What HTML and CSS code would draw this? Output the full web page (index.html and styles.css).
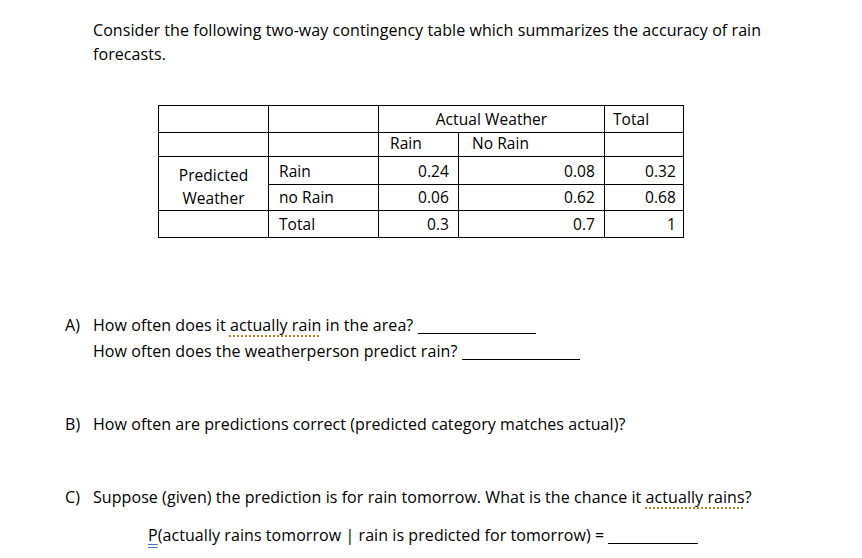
FILE: index.html
```
<!DOCTYPE html>
<html>
<head>
<meta charset="utf-8">
<link rel="stylesheet" href="styles.css">
</head>
<body>
<div class="page">
  <p class="intro">Consider the following two-way contingency table which summarizes the accuracy of rain<br>forecasts.</p>

  <table class="ct">
    <colgroup>
      <col class="c1"><col class="c2"><col class="c3"><col class="c4"><col class="c5">
    </colgroup>
    <tr class="r1">
      <td></td><td></td>
      <td colspan="2" class="center">Actual Weather</td>
      <td class="tot-head">Total</td>
    </tr>
    <tr class="r2">
      <td></td><td></td>
      <td class="rain-head">Rain</td>
      <td class="norain-head">No Rain</td>
      <td></td>
    </tr>
    <tr class="r3">
      <td rowspan="2" class="pred">Predicted<br>Weather</td>
      <td class="lab">Rain</td>
      <td class="num">0.24</td>
      <td class="num">0.08</td>
      <td class="num last">0.32</td>
    </tr>
    <tr class="r4">
      <td class="lab">no Rain</td>
      <td class="num">0.06</td>
      <td class="num">0.62</td>
      <td class="num last">0.68</td>
    </tr>
    <tr class="r5">
      <td></td>
      <td class="lab">Total</td>
      <td class="num">0.3</td>
      <td class="num">0.7</td>
      <td class="num last">1</td>
    </tr>
  </table>

  <div class="q qa">
    <span class="label">A)</span>
    <div class="qtext">
      <div class="line">How often does it <span class="spell">actually rain</span> in the area? <span class="blank w118"></span></div>
      <div class="line">How often does the weatherperson predict rain? <span class="blank w118"></span></div>
    </div>
  </div>

  <div class="q qb">
    <span class="label">B)</span>
    <div class="qtext">
      <div class="line">How often are predictions correct (predicted category matches actual)?</div>
    </div>
  </div>

  <div class="q qc">
    <span class="label">C)</span>
    <div class="qtext">
      <div class="line">Suppose (given) the prediction is for rain tomorrow. What is the chance it <span class="spell">actually rains</span>?</div>
    </div>
  </div>

  <div class="formula"><span class="gram">P</span>(actually rains tomorrow | rain is predicted for tomorrow) = <span class="blank w90"></span></div>
</div>
</body>
</html>
```

FILE: styles.css
```
html, body {
  margin: 0;
  padding: 0;
  background: #ffffff;
}

body {
  font-family: "Open Sans", "Lato", sans-serif;
  font-size: 16px;
  letter-spacing: 0.07px;
  color: #000000;
}

.page {
  width: 862px;
  height: 558px;
  padding-top: 18px;
  box-sizing: border-box;
  overflow: hidden;
}

.intro {
  margin: 0 0 0 93px;
  line-height: 24px;
  white-space: nowrap;
}

.ct {
  margin: 39px 0 0 158px;
  border-collapse: collapse;
  table-layout: fixed;
  width: 525px;
  font-size: 15.5px;
}

.ct td {
  border: 1px solid #000;
  padding: 0 0 3px 0;
  line-height: 20px;
  vertical-align: bottom;
  white-space: nowrap;
}

.c1 { width: 110px; }
.c2 { width: 110px; }
.c3 { width: 80px; }
.c4 { width: 146px; }
.c5 { width: 79px; }

.r1 td { height: 23px; }
.r2 td { height: 20px; }
.r3 td { height: 24px; }
.r4 td { height: 22px; }
.r5 td { height: 23px; }

.center { text-align: center; }
.tot-head { padding-left: 8px !important; }
.rain-head { padding-left: 11px !important; }
.norain-head { padding-left: 13px !important; }
.lab { padding-left: 10px !important; }
.num { text-align: right; padding-right: 9px !important; }
.num.last { padding-right: 7px !important; }

.ct td.pred {
  text-align: center;
  line-height: 23px;
  padding: 0;
}

.q {
  display: flex;
  margin-left: 65px;
  line-height: 26px;
  white-space: nowrap;
}

.label {
  width: 28px;
  flex: none;
}

.qa { margin-top: 74px; }
.qb { margin-top: 47px; }
.qc { margin-top: 47px; }

.formula {
  margin: 12px 0 0 148px;
  line-height: 26px;
  white-space: nowrap;
}

.spell {
  text-decoration: underline dotted #b8862e;
  text-decoration-thickness: 2px;
  text-underline-offset: 4px;
}

.gram {
  text-decoration: underline double #4472c4;
  text-underline-offset: 3px;
}

.blank {
  display: inline-block;
  height: 10px;
  border-bottom: 1px solid #000;
  vertical-align: -3px;
}

.w118 { width: 118px; }
.w90 { width: 90px; }
```
